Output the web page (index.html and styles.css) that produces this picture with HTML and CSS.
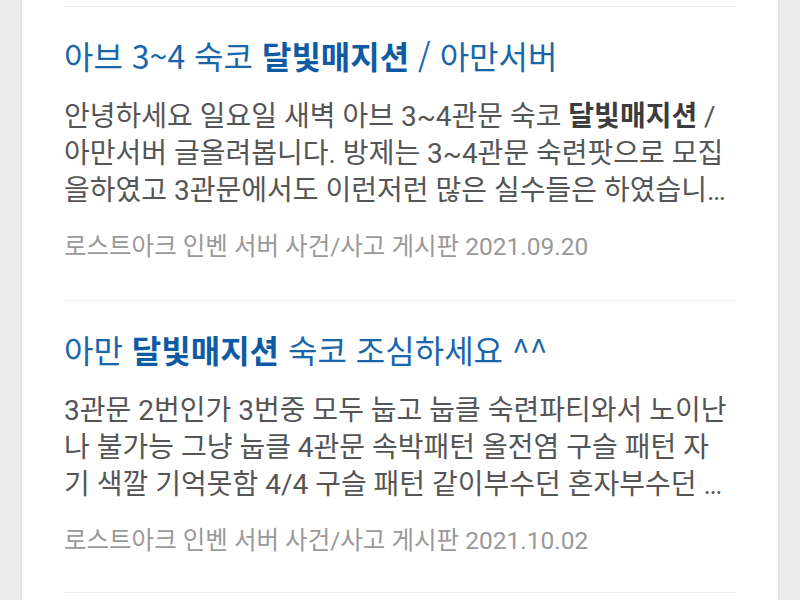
FILE: index.html
```html
<!DOCTYPE html>
<html lang="ko">
<head>
<meta charset="utf-8">
<title>검색 결과</title>
<link rel="stylesheet" href="styles.css">
</head>
<body>
<div class="card">
  <ul class="results">
    <li class="item">
      <h2 class="title">아브 3~4 숙코 <b>달빛매지션</b> / 아만서버</h2>
      <p class="desc">안녕하세요 일요일 새벽 아브 3~4관문 숙코 <b>달빛매지션</b> / 아만서버 글올려봅니다. 방제는 3~4관문 숙련팟으로 모집을하였고 3관문에서도 이런저런 많은 실수들은 하였습니다 그래도 끝까지 트라이 해주신 공대원분들께 감사드립니다</p>
      <div class="meta">로스트아크 인벤 서버 사건/사고 게시판 2021.09.20</div>
    </li>
    <li class="item">
      <h2 class="title">아만 <b>달빛매지션</b> 숙코 조심하세요 ^^</h2>
      <p class="desc">3관문 2번인가 3번중 모두 눕고 눕클 숙련파티와서 노이난나 불가능 그냥 눕클 4관문 속박패턴 올전염 구슬 패턴 자<br>기 색깔 기억못함 4/4 구슬 패턴 같이부수던 혼자부수던 상관없이 다 터트림</p>
      <div class="meta">로스트아크 인벤 서버 사건/사고 게시판 2021.10.02</div>
    </li>
  </ul>
</div>
</body>
</html>
```
FILE: styles.css
```css
html, body {
  margin: 0;
  padding: 0;
  background: #ebebeb;
}
body {
  font-family: Roboto, "Noto Sans CJK KR", sans-serif;
  overflow: hidden;
  height: 600px;
}
.card {
  margin: 0 22px;
  background: #ffffff;
  box-shadow: 0 0 3px rgba(0, 0, 0, 0.12);
  padding: 6px 42px 0;
  height: 594px;
}
.results {
  list-style: none;
  margin: 0;
  padding: 0;
}
.item {
  border-top: 1px solid #ececec;
  padding: 28px 0 35px;
}
.item:first-child {
  padding-bottom: 37px;
}
.item:last-child {
  border-bottom: 1px solid #ececec;
}
.title {
  margin: 0;
  font-family: "Noto Sans CJK KR", sans-serif;
  font-size: 32px;
  line-height: 40px;
  font-weight: 400;
  color: #1a66ab;
}
.title b {
  font-weight: 700;
  color: #0f5ba3;
}
.desc {
  margin: 23px 0 0;
  font-size: 28px;
  line-height: 37px;
  color: #555555;
  display: -webkit-box;
  -webkit-box-orient: vertical;
  -webkit-line-clamp: 3;
  overflow: hidden;
}
.desc b {
  font-weight: 700;
  color: #3c3c3c;
}
.meta {
  margin-top: 22px;
  font-size: 24.5px;
  line-height: 32px;
  color: #999999;
}
```
